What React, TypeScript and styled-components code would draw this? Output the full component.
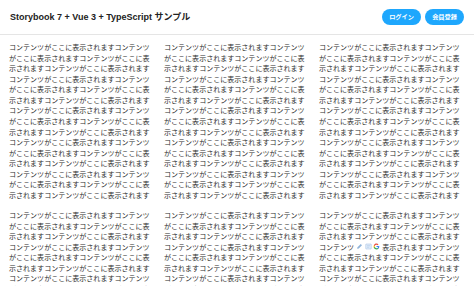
import React from 'react';
import styled, { createGlobalStyle } from 'styled-components';

const GlobalStyle = createGlobalStyle`
  html, body {
    margin: 0;
    padding: 0;
    overflow: hidden;
    background: #fff;
  }
  body {
    font-family: "Liberation Sans", "Noto Sans CJK JP", sans-serif;
    color: #333;
  }
`;

const Page = styled.div`
  position: relative;
  width: 474px;
  height: 286px;
  overflow: hidden;
`;

const Header = styled.header`
  display: flex;
  align-items: center;
  justify-content: space-between;
  padding: 9px 10px;
  border-bottom: 1px solid rgba(0, 0, 0, 0.1);
`;

const Title = styled.h1`
  margin: 0;
  font-family: "Liberation Sans", "Noto Sans CJK JP", sans-serif;
  font-size: 9px;
  font-weight: 700;
  line-height: 1;
  color: #222;
`;

const Buttons = styled.div`
  display: flex;
  gap: 4px;
`;

const Pill = styled.button`
  border: 0;
  border-radius: 3em;
  background: #1ea7fd;
  color: #fff;
  font-family: "Noto Sans CJK JP", sans-serif;
  font-weight: 700;
  font-size: 6.2px;
  line-height: 1;
  height: 16px;
  width: 39px;
  padding: 0;
  cursor: pointer;
`;

const Main = styled.main`
  display: grid;
  grid-template-columns: repeat(3, 1fr);
  column-gap: 9px;
  padding: 7px 9px 0;
`;

const Column = styled.div`
  min-width: 0;
`;

const Para = styled.p`
  margin: 0 0 9.5px;
  font-family: "Noto Sans CJK JP", sans-serif;
  font-size: 7.04px;
  line-height: 10.56px;
  color: #2e2e2e;
  word-break: break-all;
`;

const Popup = styled.div`
  position: absolute;
  left: 354px;
  top: 241px;
  width: 28px;
  height: 10px;
  background: #fff;
  display: flex;
  align-items: center;
  justify-content: space-between;
  padding: 0 2px;
  box-sizing: border-box;
`;

const text = 'コンテンツがここに表示されます'.repeat(20);

const PencilIcon = () => (
  <svg width="7" height="7" viewBox="0 0 14 14">
    <path d="M2 12 L3 8.5 L9.5 2 L12 4.5 L5.5 11 Z" fill="#8fb3d9" />
    <path d="M2 12 L3 8.5 L5.5 11 Z" fill="#c9d8ea" />
  </svg>
);

const NoteIcon = () => (
  <svg width="7" height="7" viewBox="0 0 14 14">
    <rect x="1.5" y="2" width="11" height="10" rx="1" fill="#e3eefa" stroke="#9cbbe0" strokeWidth="1" />
    <path d="M4 5.5 H10 M4 8.5 H8.5" stroke="#9cbbe0" strokeWidth="1" />
  </svg>
);

const GoogleIcon = () => (
  <svg width="7" height="7" viewBox="0 0 14 14">
    <path d="M12.6 7.1c0-.4 0-.8-.1-1.2H7v2.3h3.2c-.1.8-.6 1.4-1.2 1.8v1.5h1.9c1.1-1 1.7-2.5 1.7-4.4z" fill="#4285f4" />
    <path d="M7 13c1.6 0 2.9-.5 3.9-1.4L9 10c-.5.4-1.2.6-2 .6-1.5 0-2.8-1-3.3-2.4H1.8v1.5C2.8 11.7 4.7 13 7 13z" fill="#34a853" />
    <path d="M3.7 8.2c-.1-.4-.2-.8-.2-1.2s.1-.8.2-1.2V4.3H1.8C1.4 5.1 1.2 6 1.2 7s.2 1.9.6 2.7l1.9-1.5z" fill="#fbbc05" />
    <path d="M7 3.4c.9 0 1.6.3 2.2.9l1.7-1.7C9.9 1.6 8.6 1 7 1 4.7 1 2.8 2.3 1.8 4.3l1.9 1.5C4.2 4.4 5.5 3.4 7 3.4z" fill="#ea4335" />
  </svg>
);

const App = () => {
  const columns = [0, 1, 2];
  return (
    <Page>
      <GlobalStyle />
      <Header>
        <Title>Storybook 7 + Vue 3 + TypeScript サンプル</Title>
        <Buttons>
          <Pill>ログイン</Pill>
          <Pill>会員登録</Pill>
        </Buttons>
      </Header>
      <Main>
        {columns.map((c) => (
          <Column key={c}>
            <Para>{text}</Para>
            <Para>{text}</Para>
          </Column>
        ))}
      </Main>
      <Popup>
        <PencilIcon />
        <NoteIcon />
        <GoogleIcon />
      </Popup>
    </Page>
  );
};

export default App;
